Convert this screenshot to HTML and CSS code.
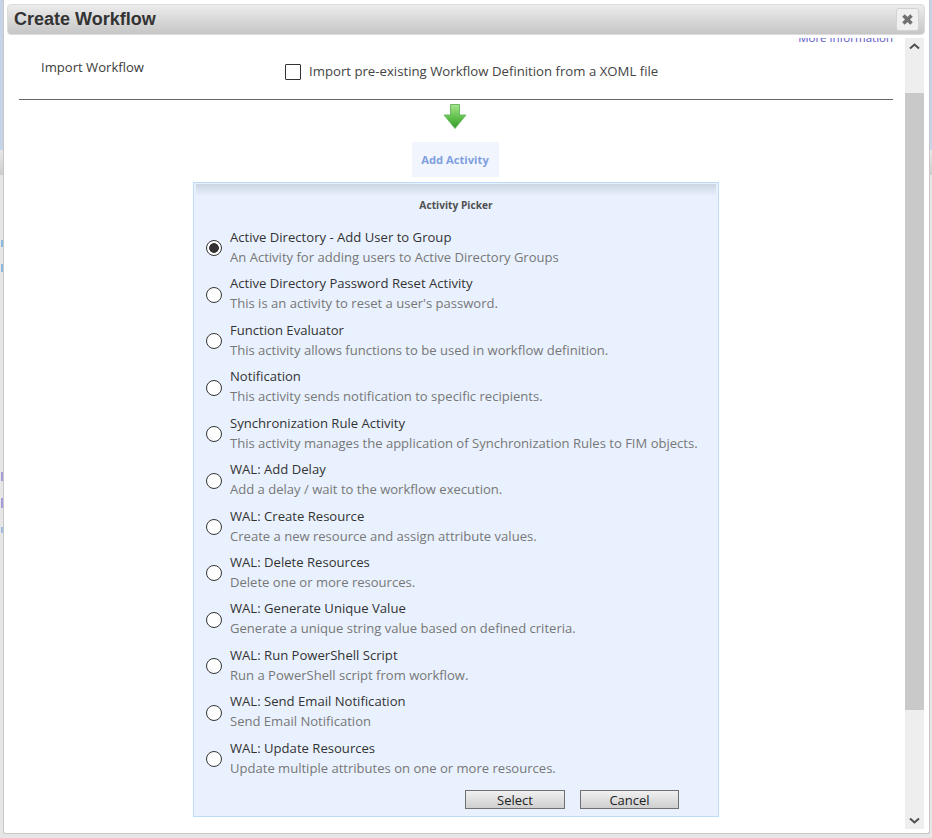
FILE: index.html
```html
<!DOCTYPE html>
<html lang="en">
<head>
<meta charset="utf-8">
<title>Create Workflow</title>
<link rel="stylesheet" href="styles.css">
</head>
<body>
<div class="dialog">
  <header class="titlebar">
    <h1 class="title">Create Workflow</h1>
    <button class="close" type="button" aria-label="Close">
      <svg width="13" height="13" viewBox="0 0 13 13"><path d="M2.5 2.5L10.5 10.5M10.5 2.5L2.5 10.5" stroke="#707070" stroke-width="3.6" fill="none"/></svg>
    </button>
  </header>
  <div class="body">
    <main class="content">
      <div class="more"><a class="more-link">More information</a></div>
      <div class="import-row">
        <div class="import-label">Import Workflow</div>
        <label class="import-check"><input class="check" type="checkbox"><span class="import-text">Import pre-existing Workflow Definition from a XOML file</span></label>
      </div>
      <hr class="rule">
      <div class="flow">
        <svg class="arrow" width="26" height="28" viewBox="0 0 26 28">
          <defs>
            <linearGradient id="g" x1="0" y1="0" x2="0" y2="1"><stop offset="0" stop-color="#a5e58c"/><stop offset=".55" stop-color="#5fc04a"/><stop offset="1" stop-color="#2f9a2c"/></linearGradient>
          </defs>
          <path d="M8.5 1.5H17.5V12H24L13 25.5L2 12H8.5Z" fill="url(#g)" stroke="#6fb867" stroke-width="1"/>
        </svg>
        <div class="add-activity">Add Activity</div>
        <section class="picker">
          <div class="picker-title">Activity Picker</div>
          <div class="options">
            <label class="option"><input class="radio" type="radio" name="a" checked><span class="text"><span class="name">Active Directory - Add User to Group</span><span class="desc">An Activity for adding users to Active Directory Groups</span></span></label>
            <label class="option"><input class="radio" type="radio" name="a"><span class="text"><span class="name">Active Directory Password Reset Activity</span><span class="desc">This is an activity to reset a user's password.</span></span></label>
            <label class="option"><input class="radio" type="radio" name="a"><span class="text"><span class="name">Function Evaluator</span><span class="desc">This activity allows functions to be used in workflow definition.</span></span></label>
            <label class="option"><input class="radio" type="radio" name="a"><span class="text"><span class="name">Notification</span><span class="desc">This activity sends notification to specific recipients.</span></span></label>
            <label class="option"><input class="radio" type="radio" name="a"><span class="text"><span class="name">Synchronization Rule Activity</span><span class="desc">This activity manages the application of Synchronization Rules to FIM objects.</span></span></label>
            <label class="option"><input class="radio" type="radio" name="a"><span class="text"><span class="name">WAL: Add Delay</span><span class="desc">Add a delay / wait to the workflow execution.</span></span></label>
            <label class="option"><input class="radio" type="radio" name="a"><span class="text"><span class="name">WAL: Create Resource</span><span class="desc">Create a new resource and assign attribute values.</span></span></label>
            <label class="option"><input class="radio" type="radio" name="a"><span class="text"><span class="name">WAL: Delete Resources</span><span class="desc">Delete one or more resources.</span></span></label>
            <label class="option"><input class="radio" type="radio" name="a"><span class="text"><span class="name">WAL: Generate Unique Value</span><span class="desc">Generate a unique string value based on defined criteria.</span></span></label>
            <label class="option"><input class="radio" type="radio" name="a"><span class="text"><span class="name">WAL: Run PowerShell Script</span><span class="desc">Run a PowerShell script from workflow.</span></span></label>
            <label class="option"><input class="radio" type="radio" name="a"><span class="text"><span class="name">WAL: Send Email Notification</span><span class="desc">Send Email Notification</span></span></label>
            <label class="option"><input class="radio" type="radio" name="a"><span class="text"><span class="name">WAL: Update Resources</span><span class="desc">Update multiple attributes on one or more resources.</span></span></label>
          </div>
          <div class="actions">
            <button class="btn" type="button">Select</button>
            <button class="btn btn-narrow" type="button">Cancel</button>
          </div>
        </section>
      </div>
    </main>
    <div class="scrollbar" aria-hidden="true">
      <svg class="sb-arrow" width="19" height="17" viewBox="0 0 19 17"><path d="M5 10.5L9.5 6.5L14 10.5" stroke="#505050" stroke-width="2" fill="none"/></svg>
      <div class="sb-track"><div class="sb-thumb"></div></div>
      <svg class="sb-arrow" width="19" height="17" viewBox="0 0 19 17"><path d="M5 6.5L9.5 10.5L14 6.5" stroke="#505050" stroke-width="2" fill="none"/></svg>
    </div>
  </div>
</div>
</body>
</html>
```
FILE: styles.css
```css
* { box-sizing: border-box; }
html, body { margin: 0; height: 100%; }
body {
  height: 838px;
  overflow: hidden;
  padding: 0 2px 4px 3px;
  font-family: "Open Sans", "Noto Sans", sans-serif;
  background:
    linear-gradient(#8db8e0, #8db8e0) no-repeat 1px 240px / 2px 7px,
    linear-gradient(#8db8e0, #8db8e0) no-repeat 1px 264px / 2px 8px,
    linear-gradient(#a99ada, #a99ada) no-repeat 1px 472px / 2px 9px,
    linear-gradient(#a99ada, #a99ada) no-repeat 1px 498px / 2px 10px,
    linear-gradient(#9dbce0, #9dbce0) no-repeat 1px 527px / 2px 6px,
    linear-gradient(#c5d4e8 0, #c5d4e8 150px, #e8e8e8 150px, #cccccc 175px, #e6e6e6 175px);
}
.dialog {
  width: 927px;
  height: 834px;
  background: #fff;
  display: flex;
  flex-direction: column;
  border: 1px solid #c8c8c8;
  border-top: 0;
  padding: 4px 4px 0 3px;
  border-radius: 0 0 3px 3px;
}
.titlebar {
  height: 31px;
  flex: none;
  display: flex;
  align-items: center;
  justify-content: space-between;
  padding: 0 5px 0 6px;
  background: linear-gradient(#ececec, #c6c6c6);
  border: 1px solid #dcdcdc;
  border-radius: 4px;
}
.title {
  margin: 0;
  font: bold 18px "Liberation Sans", Arial, sans-serif;
  color: #333;
}
.close {
  width: 23px;
  height: 23px;
  padding: 0;
  display: flex;
  align-items: center;
  justify-content: center;
  background: #f0f0f0;
  border: 1px solid #d3d3d3;
  border-radius: 3px;
}
.body {
  flex: 1;
  min-height: 0;
  display: flex;
  padding: 3px 2px 4px 12px;
}
.content {
  width: 874px;
  flex: none;
  overflow: hidden;
}
.more {
  height: 7px;
  margin-top: -7px;
  text-align: right;
  font-size: 11.5px;
  line-height: 14px;
}
.more-link { color: #5a55c8; display: block; height: 14px; }
.import-row {
  height: 61px;
  display: flex;
  align-items: flex-start;
}
.import-label {
  width: 244px;
  padding: 20px 0 0 22px;
  font-size: 13.1px;
  line-height: 18px;
  color: #3c3c3c;
}
.import-check {
  display: flex;
  align-items: center;
  gap: 8px;
  padding-top: 24px;
  font-size: 13.2px;
  line-height: 18px;
  color: #444;
  margin-left: 22px;
}
.import-text { margin-bottom: 1px; }
.check {
  appearance: none;
  width: 16px;
  height: 16px;
  margin: 0;
  background: #fff;
  border: 1px solid #333;
  border-radius: 1px;
}
.rule { margin: 0; border: 0; border-top: 1px solid #666; }
.flow { display: flex; flex-direction: column; align-items: center; }
.arrow { margin: 3px 2px 0 0; }
.add-activity {
  margin: 11px 2px 0 0;
  width: 87px;
  height: 35px;
  display: flex;
  align-items: center;
  justify-content: center;
  background: #f1f6fe;
  color: #7f9fdd;
  font-size: 11.2px;
  font-weight: 700;
}
.picker {
  margin-top: 5px;
  width: 526px;
  height: 635px;
  border: 1px solid #bcdcfb;
  background: linear-gradient(#ccd5e3 0, #e9f1fe 12px) no-repeat 2px 1px / calc(100% - 4px) 12px, #e9f1fe;
  padding: 2px 0 0 0;
}
.picker-title {
  text-align: center;
  font-size: 10.2px;
  font-weight: 700;
  color: #505050;
  padding-top: 13px;
  line-height: 15px;
}
.options { margin-top: 10.7px; }
.option {
  height: 46.45px;
  display: flex;
  align-items: center;
  gap: 8px;
  padding-left: 12px;
}
.radio {
  appearance: none;
  width: 16px;
  height: 16px;
  margin: 3px 0 0 0;
  flex: none;
  background: #fff;
  border: 1.5px solid #333;
  border-radius: 50%;
}
.radio:checked { background: radial-gradient(circle, #333 0, #333 4.5px, #fff 5.2px); }
.text { display: flex; flex-direction: column; }
.name { font-size: 13.1px; line-height: 20px; color: #333; }
.desc { font-size: 13.05px; line-height: 20px; color: #777; }
.actions {
  display: flex;
  justify-content: flex-end;
  gap: 15px;
  padding-right: 39px;
  margin-top: 9.3px;
}
.btn {
  width: 100px;
  height: 19px;
  padding: 1px 0 0;
  font: 13px/17px "Open Sans", sans-serif;
  color: #222;
  border: 1px solid #707070;
  background: linear-gradient(#f0f0f0, #cfcfcf);
}
.btn-narrow { width: 99px; }
.scrollbar {
  margin-left: 12px;
  width: 19px;
  background: #eee;
  display: flex;
  flex-direction: column;
}
.sb-arrow { flex: none; }
.sb-track { flex: 1; padding-top: 38px; padding-bottom: 102px; }
.sb-thumb { height: 100%; background: #c9c9c9; }
```
